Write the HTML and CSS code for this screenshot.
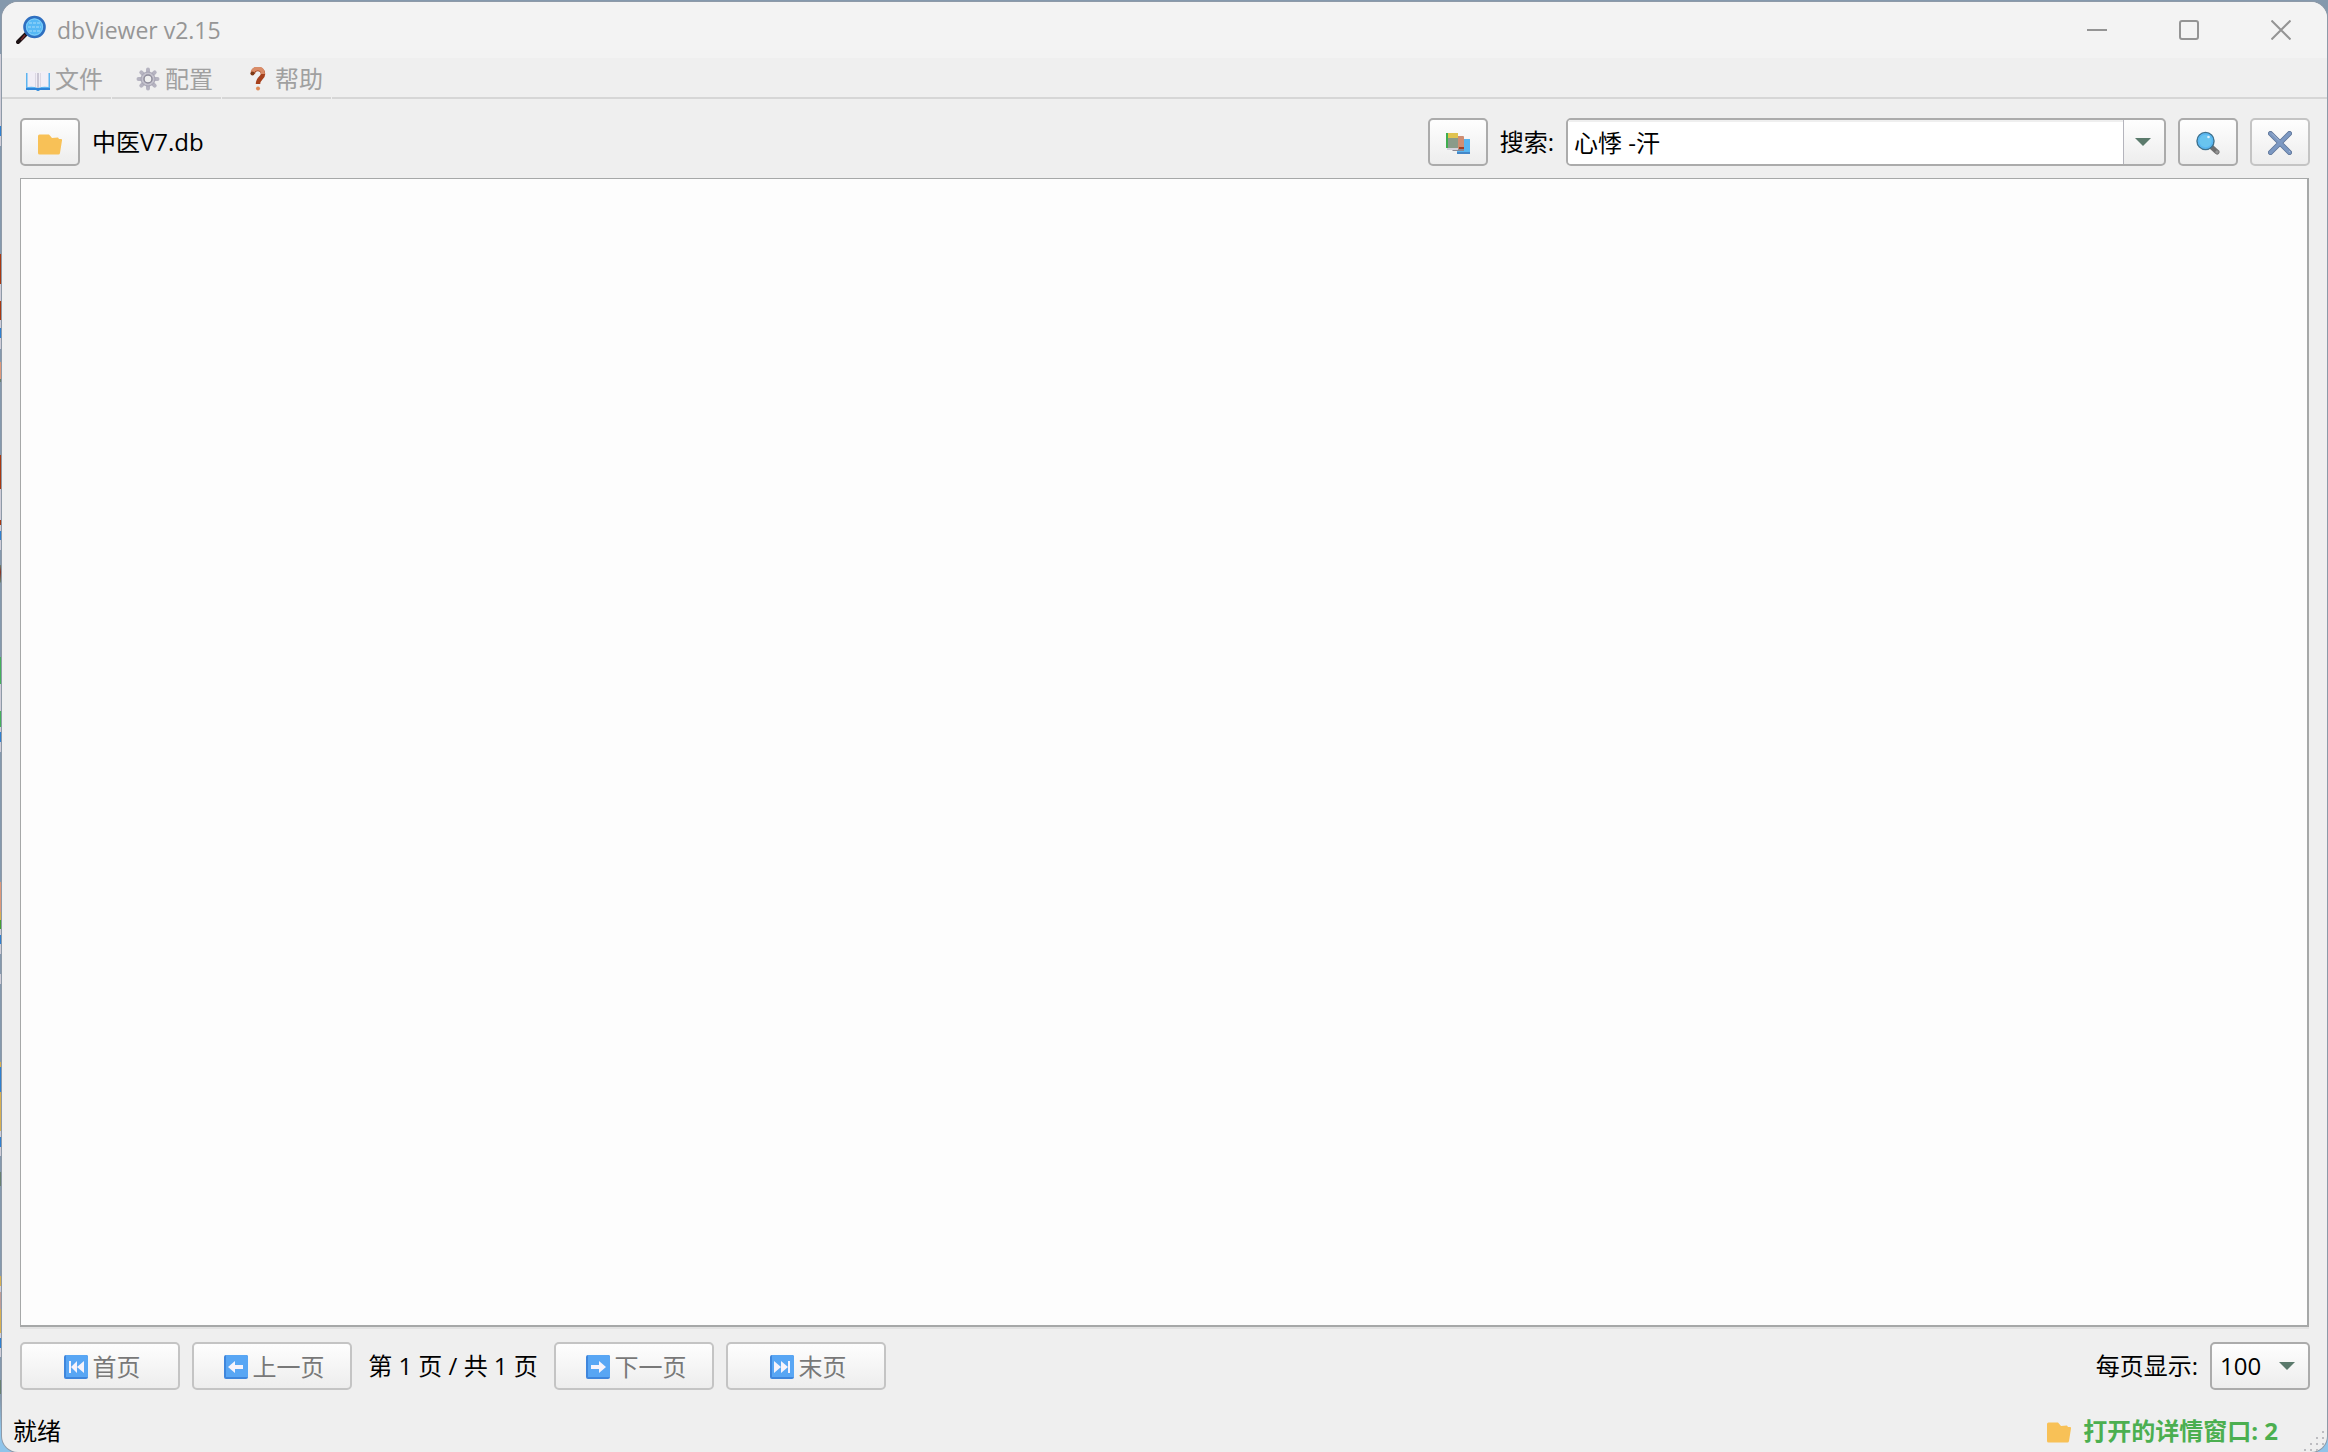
FILE: index.html
```html
<!DOCTYPE html>
<html lang="zh-CN">
<head>
    <meta charset="UTF-8">
    <meta name="viewport" content="width=device-width, initial-scale=1.0">
    <title>dbViewer v2.15</title>
    <link rel="stylesheet" href="styles.css">
</head>
<body>

<div class="window">
    <header class="titlebar">
        <svg class="app-icon" viewBox="0 0 30 30">
            <path d="M2 27 L10 19" stroke="#1c1214" stroke-width="4" stroke-linecap="round"/>
            <path d="M5 25 L9 20" stroke="#7a2a30" stroke-width="1.5"/>
            <circle cx="18.500" cy="12" r="10" fill="#56b8f5" stroke="#2f6fc0" stroke-width="2.600"/>
            <circle cx="18.500" cy="12" r="8" fill="none" stroke="#7fd0fa" stroke-width="1"/>
            <path d="M13 8h11M12 12h13M13 16h11" stroke="#a5dcfa" stroke-width="1" stroke-dasharray="3 1"/>
        </svg>
        <h1>dbViewer v2.15</h1>
        <div class="window-buttons">
            <button type="button" aria-label="最小化"><svg viewBox="0 0 20 20"><path d="M0 10h20"/></svg></button>
            <button type="button" aria-label="最大化"><svg viewBox="0 0 20 20"><rect x="1" y="1" width="18" height="18" rx="2"/></svg></button>
            <button type="button" aria-label="关闭"><svg viewBox="0 0 20 20"><path d="M.5 .5l19 19M19.500 .5l-19 19"/></svg></button>
        </div>
    </header>

    <nav class="menubar">
        <button type="button" class="menu-item">
            <svg class="icon" viewBox="0 0 24 24">
                <path d="M0 6h24v17H14l-2 1-2-1H0z" fill="#5cb4f0"/>
                <path d="M0 21h24v2H14l-2 1-2-1H0z" fill="#2f84d8"/>
                <path d="M1.500 5Q7 3 12 6Q17 3 22.500 5V20Q17 19 12 21Q7 19 1.500 20z" fill="#f1eef6"/>
                <path d="M12 6v15" stroke="#bdb8c8" stroke-width="1.500"/>
                <path d="M9.500 6v14M14.500 6v14" stroke="#dcd8e4" stroke-width="1"/>
            </svg>
            文件
        </button>
        <button type="button" class="menu-item">
            <svg class="icon" viewBox="0 0 24 24">
                <g stroke="#b5b3c0" stroke-width="4" stroke-linecap="round">
                    <path d="M12 2.500v19M2.500 12h19M5.300 5.300l13.400 13.400M18.700 5.300L5.300 18.700"/>
                </g>
                <circle cx="12" cy="12" r="7" fill="#c3c1cc" stroke="#a5a3b2" stroke-width="1"/>
                <circle cx="12" cy="12" r="4" fill="#efefef" stroke="#8f8d9c" stroke-width="1.500"/>
            </svg>
            配置
        </button>
        <button type="button" class="menu-item">
            <svg class="icon" viewBox="0 0 24 24">
                <path d="M7 7C6 1 17 0 17 7C17 11 12 11 12 17" fill="none" stroke="#a6401c" stroke-width="4.500"/>
                <path d="M6.500 5C8 0 17 0 17 7" fill="none" stroke="#d98c68" stroke-width="4"/>
                <circle cx="6.500" cy="6.500" r="2" fill="#7d3a16"/>
                <circle cx="12" cy="21.500" r="2" fill="#e08a56"/>
            </svg>
            帮助
        </button>
        <span class="menu-rest"></span>
    </nav>

    <main class="content">
        <div class="toolbar">
            <button type="button" class="btn btn-icon" aria-label="打开数据库">
                <svg class="icon" viewBox="0 0 24 24"><path d="M0 5Q0 3.500 1.500 3.500H11L14 7L20 6.500L21 8H23Q24.300 8 24 9.500L22 22Q21.700 23.500 20.500 23.500H1.500Q0 23.500 0 22z" fill="#f8c157"/></svg>
            </button>
            <span>中医V7.db</span>

            <div class="search">
                <button type="button" class="btn btn-icon" aria-label="选择表">
                    <svg class="icon" viewBox="0 0 24 24">
                        <path d="M13 8h11v15H11v-5h2z" fill="#58b5f0"/>
                        <path d="M11 21h13v2H11z" fill="#4587c8"/>
                        <path d="M10 5h7q1 0 1 1v13H6v-3h4z" fill="#d08e72"/>
                        <path d="M13 16h5v3h-5z" fill="#a23c20"/>
                        <path d="M5 18h13v2H7z" fill="#8a8894"/>
                        <path d="M0 2h12v15H0z" fill="#8a9b8a"/>
                        <path d="M2 2h10v5H2z" fill="#e0c350"/>
                        <path d="M0 2h2v15H0z" fill="#3fae50"/>
                        <path d="M1 17h11v2H1z" fill="#d4d2dc"/>
                    </svg>
                </button>
                <label for="keyword">搜索:</label>
                <div class="combo">
                    <input type="text" id="keyword" value="心悸 -汗">
                    <button type="button" aria-label="搜索历史">
                        <svg class="arrow" viewBox="0 0 16 8"><path d="M0 0h16L8 8z"/></svg>
                    </button>
                </div>
                <button type="button" class="btn btn-icon" aria-label="搜索">
                    <svg class="icon" viewBox="0 0 24 24">
                        <path d="M15.500 16L21 21" stroke="#6f6f6f" stroke-width="5" stroke-linecap="round"/>
                        <path d="M20 22l2-2" stroke="#959595" stroke-width="3"/>
                        <circle cx="9.500" cy="10" r="8.500" fill="#69c4ef" stroke="#3f7390" stroke-width="1.500"/>
                        <circle cx="9.500" cy="10" r="7" fill="none" stroke="#58b6f2" stroke-width="1.500"/>
                        <circle cx="12.500" cy="6" r="1.300" fill="#dff2fc"/>
                    </svg>
                </button>
                <button type="button" class="btn btn-icon btn-muted" aria-label="清除">
                    <svg class="icon" viewBox="0 0 24 24">
                        <path d="M2.500 2.500l19 19M21.500 2.500l-19 19" stroke="#5c7396" stroke-width="5" stroke-linecap="round"/>
                        <path d="M2.500 2.500l19 19M21.500 2.500l-19 19" stroke="#7c98c2" stroke-width="3.500" stroke-linecap="round"/>
                        <path d="M4 2.500l7 7M21 21l1-1" stroke="#a5b8d6" stroke-width="1"/>
                    </svg>
                </button>
            </div>
        </div>

        <section class="result-list" aria-label="搜索结果"></section>

        <div class="pager">
            <button type="button" class="btn btn-page btn-muted">
                <svg class="icon" viewBox="0 0 24 24">
                    <rect width="24" height="24" rx="2" fill="#3f86dc"/>
                    <path d="M2 0h20q2 0 2 2v20H2z" fill="#58a6f4"/>
                    <path d="M5 6h2v12H5zM13 6v12l-6-6zM20 6v12l-7-6z" fill="#f6f3fb"/>
                </svg>
                首页
            </button>
            <button type="button" class="btn btn-page btn-muted">
                <svg class="icon" viewBox="0 0 24 24">
                    <rect width="24" height="24" rx="2" fill="#3f86dc"/>
                    <path d="M2 0h20q2 0 2 2v20H2z" fill="#58a6f4"/>
                    <path d="M4 12l7-6v4h8v4h-8v4z" fill="#f6f3fb"/>
                </svg>
                上一页
            </button>
            <span class="page-info">第 1 页 / 共 1 页</span>
            <button type="button" class="btn btn-page btn-muted">
                <svg class="icon" viewBox="0 0 24 24">
                    <rect width="24" height="24" rx="2" fill="#3f86dc"/>
                    <path d="M2 0h20q2 0 2 2v20H2z" fill="#58a6f4"/>
                    <path d="M20 12l-7-6v4H5v4h8v4z" fill="#f6f3fb"/>
                </svg>
                下一页
            </button>
            <button type="button" class="btn btn-page btn-muted">
                <svg class="icon" viewBox="0 0 24 24">
                    <rect width="24" height="24" rx="2" fill="#3f86dc"/>
                    <path d="M2 0h20q2 0 2 2v20H2z" fill="#58a6f4"/>
                    <path d="M18 6h2v12h-2zM11 6v12l7-6zM4 6v12l7-6z" fill="#f6f3fb"/>
                </svg>
                末页
            </button>

            <div class="page-size">
                <label for="page-size">每页显示:</label>
                <div class="select-wrap">
                    <select id="page-size">
                        <option>50</option>
                        <option selected>100</option>
                        <option>200</option>
                    </select>
                    <svg class="arrow" viewBox="0 0 16 8"><path d="M0 0h16L8 8z"/></svg>
                </div>
            </div>
        </div>
    </main>

    <footer class="statusbar">
        <span>就绪</span>
        <span class="open-windows">
            <svg class="icon" viewBox="0 0 24 24"><path d="M0 5Q0 3.500 1.500 3.500H11L14 7L20 6.500L21 8H23Q24.300 8 24 9.500L22 22Q21.700 23.500 20.500 23.500H1.500Q0 23.500 0 22z" fill="#f8c157"/></svg>
            打开的详情窗口: 2
        </span>
        <svg class="grip" viewBox="0 0 24 24">
            <path d="M1 22h2M7 22h2M13 22h2M19 22h2M7 16h2M13 16h2M19 16h2M13 10h2M19 10h2M19 4h2"/>
        </svg>
    </footer>
</div>

</body>
</html>
```

FILE: styles.css
```css
* {
    box-sizing: border-box;
}
body {
    display: flex;
    height: 100vh;
    margin: 0;
    padding: 2px 1px 0 2px;
    font-family: "Open Sans", "Noto Sans CJK SC", sans-serif;
    font-size: 24px;
    line-height: 32px;
    color: #000;
    /* the desktop icons that show past the left edge of the window */
    background:
        linear-gradient(
            transparent 54px, #cfcdd8 54px, #cfcdd8 126px, #2f80d0 126px, #2f80d0 136px,
            #cfcdd8 136px, #cfcdd8 146px, transparent 146px, transparent 254px,
            #a8380f 254px, #a8380f 284px, #cfcdd8 284px, #cfcdd8 301px, #a8380f 301px, #a8380f 320px,
            #cfcdd8 320px, #cfcdd8 328px, #2f80d0 328px, #2f80d0 338px, #cfcdd8 338px, #cfcdd8 349px,
            transparent 349px, transparent 362px, #e09878 362px, #e09878 379px, #68806f 379px, #68806f 382px,
            transparent 382px, transparent 455px, #a8380f 455px, #a8380f 489px, #cfcdd8 489px, #cfcdd8 520px,
            #a8380f 520px, #a8380f 525px, #cfcdd8 525px, #cfcdd8 531px, #2f80d0 531px, #2f80d0 540px,
            #cfcdd8 540px, #cfcdd8 550px, transparent 550px, transparent 565px, #68806f 565px, #8c3020 572px,
            #68806f 582px, transparent 583px, transparent 657px,
            #45b05a 657px, #45b05a 684px, #cfcdd8 684px, #cfcdd8 711px, #45b05a 711px, #45b05a 727px,
            #cfcdd8 727px, #cfcdd8 732px, #2f80d0 732px, #2f80d0 742px, #cfcdd8 742px, #cfcdd8 752px,
            transparent 752px, transparent 882px, #e09878 882px, #e09878 912px, #d9b050 912px, #d9b050 920px,
            #45a030 920px, #45a030 929px, #cfcdd8 929px, #cfcdd8 935px, #2f80d0 935px, #2f80d0 944px,
            #cfcdd8 944px, #cfcdd8 954px, transparent 954px, transparent 974px, #cfcdd8 974px, #cfcdd8 984px,
            transparent 984px, transparent 1062px, #d9b050 1062px, #d9b050 1067px, #2f80d0 1067px, #2f80d0 1092px,
            #d9b050 1092px, #d9b050 1131px, #cfcdd8 1131px, #cfcdd8 1137px, #2f80d0 1137px, #2f80d0 1147px,
            #cfcdd8 1147px, #cfcdd8 1156px, transparent 1156px, transparent 1172px, #68806f 1172px, #68806f 1186px,
            transparent 1186px, transparent 1276px, #d9b050 1276px, #d9b050 1286px, #cfcdd8 1286px, #cfcdd8 1292px,
            #c09c94 1292px, #c09c94 1309px, #d9b050 1309px, #d9b050 1333px, #cfcdd8 1333px, #cfcdd8 1338px,
            #2f80d0 1338px, #2f80d0 1348px, #cfcdd8 1348px, #cfcdd8 1357px, transparent 1357px, transparent 1380px,
            #68806f 1380px, #68806f 1394px, transparent 1394px
        ) left top / 2px 1400px no-repeat,
        linear-gradient(#8599ad 1400px, #8fc4ea 1430px);
}
button, input, select {
    font: inherit;
    color: inherit;
}
.window {
    flex: 1;
    display: flex;
    flex-direction: column;
    background-color: #efefef;
    border-radius: 16px;
    box-shadow: 0 0 0 1px #8e9aa8;
    overflow: hidden;
}

/* title bar */
.titlebar {
    display: flex;
    align-items: center;
    gap: 11px;
    height: 56px;
    padding-left: 14px;
    background-color: #f3f3f3;
}
.titlebar h1 {
    margin: 0;
    font-size: 23px;
    font-weight: normal;
    color: #969696;
}
.app-icon {
    width: 30px;
    height: 30px;
    fill: none;
}
.window-buttons {
    display: flex;
    align-self: stretch;
    margin-left: auto;
}
.window-buttons button {
    display: flex;
    align-items: center;
    justify-content: center;
    width: 92px;
    padding: 0;
    border: none;
    background: none;
}
.window-buttons svg {
    width: 20px;
    height: 20px;
    fill: none;
    stroke: #949494;
    stroke-width: 2;
}

/* menu */
.menubar {
    display: flex;
    gap: 1px;
    height: 41px;
}
.menu-item {
    display: flex;
    align-items: center;
    gap: 5px;
    width: 109px;
    padding: 2px 0 0 24px;
    border: none;
    border-bottom: 2px solid #d6d6d6;
    background: none;
    color: #a0a0a0;
    white-space: nowrap;
}
.menu-rest {
    flex: 1;
    border-bottom: 2px solid #d6d6d6;
}
.icon {
    flex: none;
    width: 24px;
    height: 24px;
}

/* main area */
.content {
    flex: 1;
    display: flex;
    flex-direction: column;
    padding: 19px 17px 20px 18px;
}
.toolbar, .pager, .search, .page-size {
    display: flex;
    align-items: center;
    gap: 12px;
}
.search, .page-size {
    margin-left: auto;
}
.btn, .combo, .select-wrap select {
    height: 48px;
    border: 2px solid #ababab;
    border-radius: 5px;
    background: linear-gradient(#fefefe, #ededed);
}
.btn {
    display: flex;
    align-items: center;
    justify-content: center;
    gap: 5px;
    padding: 2px 0 0;
}
.btn-icon {
    width: 60px;
}
.btn-page {
    width: 160px;
    padding-left: 4px;
    color: #787878;
}
.btn-muted {
    border-color: #c4c4c4;
}
.page-info {
    min-width: 178px;
    text-align: center;
}
.combo {
    display: flex;
    width: 600px;
    overflow: hidden;
}
.combo input {
    flex: 1;
    min-width: 0;
    padding: 0 6px;
    border: none;
    border-top: 2px solid #efefef;
    background-color: #fff;
    outline: none;
}
.combo button {
    display: flex;
    align-items: center;
    justify-content: center;
    width: 41px;
    padding: 0 2px 0 0;
    border: none;
    border-left: 1px solid #b4b4bc;
    background: none;
}
.arrow {
    width: 16px;
    height: 8px;
    fill: #5b7a6c;
}
.result-list {
    flex: 1;
    margin: 12px 1px 15px 0;
    border: 1px solid #a6a8a8;
    border-width: 1px 2px 2px 1px;
    background-color: #fdfdfd;
    box-shadow: 0 2px 0 #e2e2e2;
}
.select-wrap {
    display: grid;
    align-items: center;
}
.select-wrap select, .select-wrap .arrow {
    grid-area: 1 / 1;
}
.select-wrap select {
    width: 100px;
    padding: 0 8px;
    appearance: none;
}
.select-wrap .arrow {
    justify-self: end;
    margin-right: 15px;
    pointer-events: none;
}

/* status bar */
.statusbar {
    display: flex;
    align-items: center;
    height: 42px;
    padding-left: 11px;
}
.open-windows {
    display: flex;
    align-items: center;
    gap: 12px;
    margin-left: auto;
    margin-right: 25px;
    font-weight: bold;
    color: #4caf50;
}
.grip {
    align-self: flex-end;
    width: 24px;
    height: 24px;
    fill: none;
    stroke: #bcbcc0;
    stroke-width: 2;
}
```
